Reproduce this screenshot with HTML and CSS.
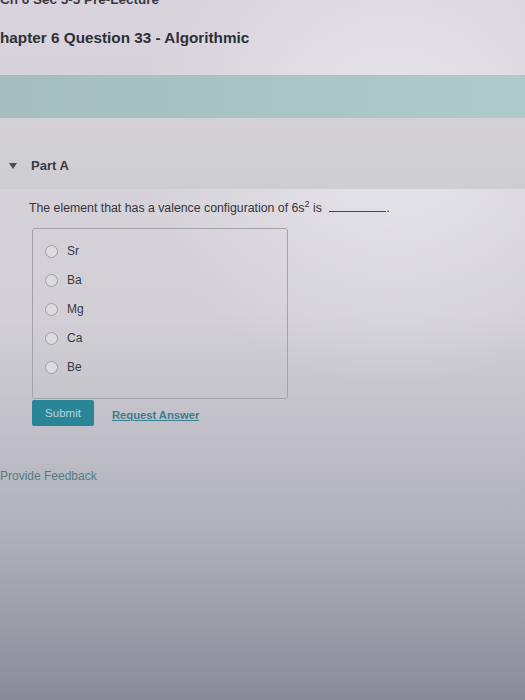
FILE: index.html
```html
<!DOCTYPE html>
<html lang="en">
<head>
    <meta charset="UTF-8">
    <meta name="viewport" content="width=device-width, initial-scale=1.0">
    <title>Chapter 6 Question 33 - Algorithmic</title>
    <link rel="stylesheet" href="styles.css">
</head>
<body>

    <div class="page">
        <div class="crumb">Ch 6 Sec 5-5 Pre-Lecture</div>
        <h1 class="title">hapter 6 Question 33 - Algorithmic</h1>

        <div class="bar"></div>

        <div class="part-head">
            <span class="caret"></span>
            <span class="part-label">Part A</span>
        </div>

        <div class="part-body">
            <p class="question">The element that has a valence configuration of 6s<sup>2</sup> is <span class="blank"></span>.</p>

            <div class="choices">
                <label class="choice"><span class="radio"></span>Sr</label>
                <label class="choice"><span class="radio"></span>Ba</label>
                <label class="choice"><span class="radio"></span>Mg</label>
                <label class="choice"><span class="radio"></span>Ca</label>
                <label class="choice"><span class="radio"></span>Be</label>
            </div>

            <div class="actions">
                <button class="submit">Submit</button>
                <a class="request" href="#">Request Answer</a>
            </div>
        </div>

        <a class="feedback" href="#">Provide Feedback</a>
    </div>

</body>
</html>
```

FILE: styles.css
```css
html, body {
    height: 100%;
}
body {
    margin: 0;
    font-family: "Liberation Sans", Arial, sans-serif;
    color: #3a3a40;
    background:
        radial-gradient(ellipse 70% 50% at 75% 20%, rgba(236, 234, 242, 0.8), rgba(236, 234, 242, 0) 70%),
        linear-gradient(180deg, #d8d3dc 0%, #d2d0d6 45%, #b2b2bc 75%, #8a8b99 100%);
    overflow: hidden;
}
.page {
    display: flex;
    flex-direction: column;
}
/* breadcrumb sits half off the top edge, as in the photo */
.crumb {
    font-size: 13.5px;
    font-weight: bold;
    color: #3a3a44;
    line-height: 15px;
    margin-top: -8px;
    white-space: nowrap;
}
.title {
    margin: 21px 0 0 0;
    font-size: 15.3px;
    font-weight: bold;
    color: #2f2f36;
    line-height: 20px;
}
.bar {
    margin-top: 27px;
    height: 43px;
    background: linear-gradient(90deg, #a6bebe 0%, #a9c4c6 50%, #aecacd 100%);
}
.part-head {
    display: flex;
    align-items: center;
    gap: 14px;
    padding: 40px 0 16px 9px;
    background: linear-gradient(180deg, #d3d1d6 0%, #cecdd2 100%);
}
.caret {
    width: 0;
    height: 0;
    border-left: 4px solid transparent;
    border-right: 4px solid transparent;
    border-top: 6px solid #4a4a52;
}
.part-label {
    font-size: 13px;
    color: #3a3a42;
    font-weight: bold;
}
.part-body {
    padding: 0 0 0 32px;
    display: flex;
    flex-direction: column;
    align-items: flex-start;
}
.question {
    margin: 10px 0 0 -3px;
    font-size: 12.3px;
    color: #35353c;
}
.question sup {
    font-size: 9px;
}
.blank {
    display: inline-block;
    width: 57px;
    border-bottom: 1px solid #45454c;
    margin-left: 4px;
}
.choices {
    margin-top: 13px;
    width: 242px;
    padding: 14px 0 10px 12px;
    border: 1px solid #a4a3a8;
    border-radius: 3px;
    display: flex;
    flex-direction: column;
    gap: 13px;
    height: 145px;
}
.choice {
    display: flex;
    align-items: center;
    gap: 9px;
    font-size: 12px;
    color: #38383e;
    height: 16px;
}
.radio {
    width: 11px;
    height: 11px;
    border: 1px solid #9e9ea4;
    border-radius: 50%;
    background: #dcdbe0;
}
.actions {
    display: flex;
    align-items: center;
    gap: 18px;
    margin-top: 1px;
}
.submit {
    font-family: "Liberation Sans", Arial, sans-serif;
    font-size: 11.5px;
    color: #b6d4d8;
    background: #2a8596;
    border: none;
    border-radius: 2px;
    padding: 0 9px;
    height: 26px;
    width: 62px;
}
.request {
    font-size: 11.2px;
    font-weight: bold;
    color: #3e7c8c;
    text-decoration: underline;
    margin-top: 4px;
}
.feedback {
    margin-top: 43px;
    font-size: 12px;
    color: #4f7d86;
    text-decoration: none;
}
```
